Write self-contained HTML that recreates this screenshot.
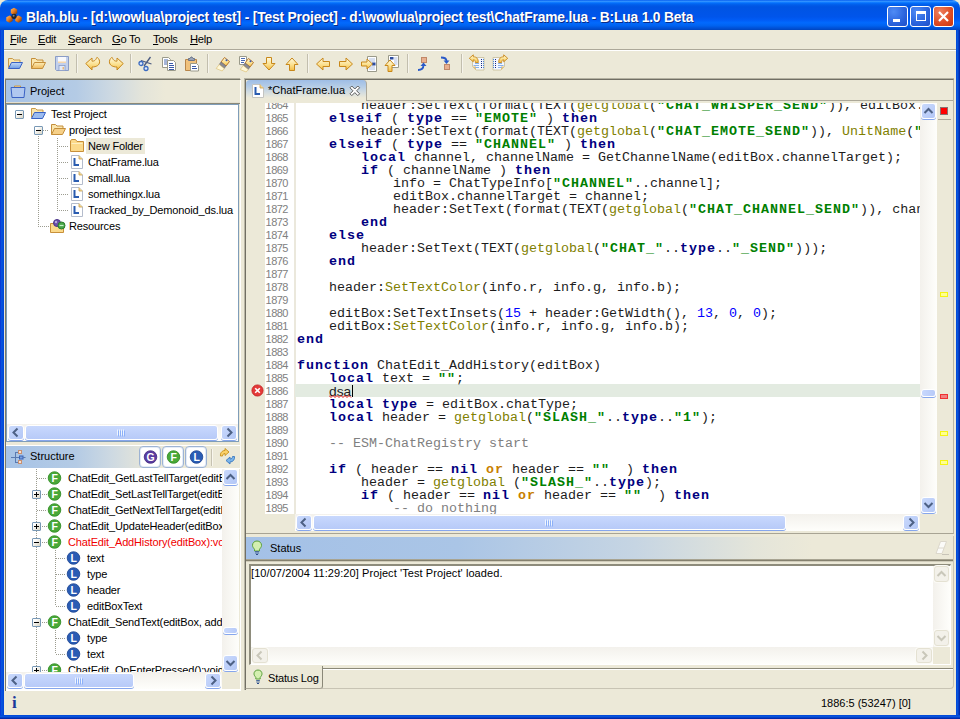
<!DOCTYPE html>
<html><head><meta charset="utf-8"><title>Blah.blu - B:Lua 1.0 Beta</title>
<style>
*{box-sizing:border-box;margin:0;padding:0}
html,body{width:960px;height:719px;overflow:hidden;background:#ece9d8}
body{position:relative;font-family:"Liberation Sans",sans-serif;font-size:11px;color:#000}
.abs{position:absolute}
#title{left:0;top:0;width:960px;height:30px;border-radius:8px 8px 0 0;
 background:linear-gradient(to bottom,#0058ee 0%,#3593ff 4%,#288eff 6%,#127dff 8%,#036ffc 10%,#0262ee 14%,#0057e5 20%,#0054e3 24%,#0055eb 56%,#005bf5 66%,#026afe 76%,#0062ef 86%,#0054dc 92%,#004ccc 97%,#0044bc 100%)}
#title .txt{left:26px;top:10px;font-weight:bold;font-size:13.8px;letter-spacing:-.165px;color:#fff;white-space:nowrap;text-shadow:1px 1px 0 #0a2c86}
#bl{left:0;top:30px;width:4px;height:689px;background:linear-gradient(to right,#0831d9,#0855dd 40%,#0046d8)}
#br{left:956px;top:30px;width:4px;height:689px;background:linear-gradient(to right,#0046d8,#0855dd 40%,#001ea0)}
#bb{left:0;top:715px;width:960px;height:4px;background:linear-gradient(to bottom,#0046d8,#0855dd 40%,#001ea0)}
#menu{left:4px;top:30px;width:952px;height:20px;background:#ece9d8}
#menu span{position:absolute;top:3px;font-size:11.2px;letter-spacing:-.3px;white-space:nowrap}
#menu u{text-decoration:underline}
.wb{top:6px;width:21px;height:21px;border:1px solid #fff;border-radius:3px;background:radial-gradient(circle at 30% 25%,#4f8bf5,#2a63dc 60%,#1e4fc8)}
.wb.wc{background:radial-gradient(circle at 30% 25%,#ee8060,#de4a22 60%,#c8360e)}
/*STCSS*/
/*ENDSTCSS*//*LEFTCSS*/
.sbtn{position:absolute;border:1px solid #fff;border-radius:3px;background:linear-gradient(135deg,#c9d9fc,#b3c7f6);box-shadow:0 1px 0 #86a6ec}
.thumb{position:absolute;border:1px solid #fff;border-radius:3px;background:linear-gradient(to bottom,#c8d8fd,#b7caf8);box-shadow:0 1px 0 #86a6ec}
.thumbv{position:absolute;border:1px solid #fff;border-radius:3px;background:linear-gradient(to right,#c8d8fd,#b7caf8);box-shadow:0 1px 0 #86a6ec}
.dbtn{position:absolute;border:1px solid #e4e1d2;border-radius:3px;background:#f3f1ea;box-shadow:0 0 0 1px #fbfaf6}

.hdr{background:linear-gradient(to right,#a7c3e6 0%,#b4cbe5 30%,#cdd9e2 45%,#e3e4da 58%,#ece9d8 68%)}
.hdr .t{position:absolute;left:24px;top:5px;font-size:11px;white-space:nowrap}
.tree{background:#fff;overflow:hidden}
.row{position:absolute;left:0;height:16px;line-height:16px;white-space:nowrap;font-size:11px;letter-spacing:-.15px}
.row .lb{position:absolute;top:0;height:16px;padding:0 2px 0 2px}
.box{position:absolute;width:9px;height:9px;border:1px solid #7898b5;border-radius:1px;background:linear-gradient(135deg,#fff 20%,#d8d4c4 100%)}
.box:before{content:"";position:absolute;left:1px;top:3px;width:5px;height:1px;background:#000}
.box.p:after{content:"";position:absolute;left:3px;top:1px;width:1px;height:5px;background:#000}
.dv{position:absolute;width:1px;background-image:linear-gradient(to bottom,#9c9c90 50%,transparent 50%);background-size:1px 2px}
.dh{position:absolute;height:1px;background-image:linear-gradient(to right,#9c9c90 50%,transparent 50%);background-size:2px 1px}
/*ENDLEFTCSS*//*EDCSS*/
#code{font-family:"Liberation Mono",monospace;font-size:12px;line-height:13px;white-space:pre;color:#1c1c1c}
#code .ln{position:absolute;left:0;height:13px;transform:scaleX(1.11111);transform-origin:0 0}
#code b{font-weight:bold;letter-spacing:.9px}
.k{color:#000080}.s{color:#008000}.o{color:#c88000}.n{color:#0000ff;}.f{color:#808000}.c{color:#808080}
#nums{font-size:11px;letter-spacing:-.5px;text-align:right;line-height:13px;color:#808080;white-space:pre}
#nums div{position:absolute;right:6px;height:13px}
/*ENDEDCSS*/</style></head><body>
<div id="title" class="abs"><svg class="abs" style="left:5px;top:7px" width="18" height="17" viewBox="0 0 18 17"><defs><linearGradient id="og" x1="0" y1="0" x2="1" y2="1"><stop offset="0" stop-color="#ffc070"/><stop offset=".5" stop-color="#e87818"/><stop offset="1" stop-color="#5a3018"/></linearGradient></defs><path d="M9 .8l3.200 1.800v3.600l-3.200 1.800-3.200-1.800v-3.600z" fill="url(#og)"/><path d="M4.500 8.500l3.200 1.800v3.600l-3.200 1.800-3.200-1.800v-3.600z" fill="url(#og)"/><path d="M13.500 8.500l3.200 1.800v3.600l-3.200 1.800-3.200-1.800v-3.600z" fill="url(#og)"/><circle cx="9" cy="9.300" r="2.600" fill="#20242c"/><circle cx="8.600" cy="8.800" r="1" fill="#788088"/></svg><div class="abs wb" style="left:887px"><div class="abs" style="left:5px;top:12px;width:7px;height:3px;background:#fff"></div></div>
<div class="abs wb" style="left:910px"><div class="abs" style="left:5px;top:4px;width:10px;height:10px;border:1px solid #fff;border-top-width:3px"></div></div>
<div class="abs wb wc" style="left:933px"><svg class="abs" style="left:0;top:0" width="19" height="19"><path d="M5 5l9 9M14 5l-9 9" stroke="#fff" stroke-width="2.200"/></svg></div><div class="abs txt">Blah.blu - [d:\wowlua\project test] - [Test Project] - d:\wowlua\project test\ChatFrame.lua - B:Lua 1.0 Beta</div></div>
<div id="bl" class="abs"></div><div id="br" class="abs"></div><div id="bb" class="abs"></div>
<div id="menu" class="abs"><span style="left:6px"><u>F</u>ile</span><span style="left:34px"><u>E</u>dit</span><span style="left:64px"><u>S</u>earch</span><span style="left:108px"><u>G</u>o To</span><span style="left:149px"><u>T</u>ools</span><span style="left:186px"><u>H</u>elp</span></div>
<div id="tbsep" class="abs" style="left:4px;top:49px;width:952px;height:2px;border-top:1px solid #aca899;border-bottom:1px solid #fff"></div>
<div id="toolbar" class="abs" style="left:0;top:51px;width:960px;height:28px">
<svg class="abs" style="left:0;top:0" width="960" height="28" viewBox="0 0 960 28">
<defs>
<linearGradient id="gold" x1="0" y1="0" x2="0" y2="1"><stop offset="0" stop-color="#fffbe2"/><stop offset=".55" stop-color="#fbe08e"/><stop offset="1" stop-color="#f4bc44"/></linearGradient>
<linearGradient id="fold" x1="0" y1="0" x2="0" y2="1"><stop offset="0" stop-color="#fdeeb8"/><stop offset="1" stop-color="#eeb85a"/></linearGradient>
<linearGradient id="blu" x1="0" y1="0" x2="0" y2="1"><stop offset="0" stop-color="#c4daf8"/><stop offset="1" stop-color="#6c9ce4"/></linearGradient>
</defs>
<g fill="none" stroke="#c2beae"><path d="M76.5 3v19M130.5 3v19M207.5 3v19M307.5 3v19M407.5 3v19M461.5 3v19"/></g>
<g fill="none" stroke="#f6f4ec"><path d="M77.5 3v19M131.5 3v19M208.5 3v19M308.5 3v19M408.5 3v19M462.5 3v19"/></g>
<!-- open project -->
<g transform="translate(7,5)"><path d="M1.5 11.5V2.5h4l1.5 1.5h6v2" fill="#fae6ae" stroke="#c89a4a"/><path d="M1.5 12.5l3-6h11l-3 6z" fill="url(#blu)" stroke="#3a62c4"/></g>
<!-- open folder -->
<g transform="translate(30,5)"><path d="M1.5 12.5V2.5h4l1.5 1.5h6v2.5" fill="#fae6ae" stroke="#c48e3a"/><path d="M1.5 12.5l3-6h11l-3 6z" fill="url(#fold)" stroke="#c48e3a"/></g>
<!-- save disabled -->
<g transform="translate(54,4)"><path d="M1.500 1.500h13v14h-12l-1-1z" fill="#c2d0ec" stroke="#8a9cc6"/><rect x="4" y="2" width="8" height="6" fill="#f8f9fd" stroke="none"/><rect x="4" y="6.500" width="8" height="1.500" fill="#f6d6aa"/><rect x="5" y="10.500" width="6" height="5" fill="#e2eaf8" stroke="#8a9cc6" stroke-width=".8"/><rect x="8.500" y="12" width="1.500" height="2.500" fill="#eab878"/></g>
<!-- undo -->
<g transform="translate(85,5)"><path d="M.8 7.5L7 2v3.2c1.5 0 3.600-.3 4.800-3.700c.5-.3 2.800 1.500 2.800 4.300c0 3.200-3 5.200-7.600 5.200V14z" fill="url(#gold)" stroke="#c8881a" stroke-width="1" stroke-linejoin="round"/></g>
<!-- redo -->
<g transform="translate(124,5) scale(-1,1)"><path d="M.8 7.500L7 2v3.200c1.500 0 3.600-.3 4.800-3.700c.5-.3 2.800 1.500 2.800 4.300c0 3.200-3 5.200-7.600 5.200V14z" fill="url(#gold)" stroke="#c8881a" stroke-width="1" stroke-linejoin="round"/></g>
<!-- cut -->
<g transform="translate(138,5)" fill="none" stroke="#3a6ac0" stroke-width="1.300"><path d="M12.500 1L6 10M3 4.500l10.500 3.500" stroke="#4a5a80"/><circle cx="3" cy="7.500" r="2" fill="#dfeafc"/><circle cx="8" cy="12.500" r="2" fill="#dfeafc"/></g>
<!-- copy -->
<g transform="translate(161,5)"><path d="M1.500 1.500h6l2 2v8h-8z" fill="#fff" stroke="#9a9a8a"/><path d="M3 4h4M3 6h5M3 8h5" stroke="#4a6ab0"/><path d="M6.500 4.500h6l2 2v8h-8z" fill="#fff" stroke="#9a9a8a"/><path d="M8 7.500h4M8 9.500h5M8 11.500h5M8 13.500h5" stroke="#3a5aa8"/></g>
<!-- paste -->
<g transform="translate(184,5)"><path d="M1.500 3.500h11v11h-11z" fill="#f0c27c" stroke="#b8864a"/><path d="M4.500 4.500v-2h1.500l1-1.500h1l1 1.500h1.500v2z" fill="#9aa4b8" stroke="#6a7488"/><path d="M6.500 7.500h6l2 2v5.500h-8z" fill="#fff" stroke="#9a9a8a"/><path d="M8 10.500h4M8 12.500h5" stroke="#3a5aa8"/></g>
<!-- find -->
<g transform="translate(215,5)"><path d="M9.500 1.500l5 4-3.500 4.500-5-4z" fill="url(#gold)" stroke="#b8782a"/><circle cx="11.500" cy="4.200" r="1" fill="#3a5ab0"/><path d="M6 6l5 4-1.800 2.500-5-4z" fill="#8a8a92" stroke="#6a6a72" stroke-width=".6"/><path d="M4.200 8.500l5 4-2 2.500-6-2.500z" fill="#fff8d8" stroke="#d8b868" stroke-width=".6"/></g>
<!-- find next -->
<g transform="translate(238,5)"><path d="M1.500 .5h7v8h-7z" fill="#fff" stroke="#9a9a8a"/><path d="M3 2.500h4M3 4.500h4M3 6.500h3" stroke="#4a6ab0"/><g transform="translate(1,1)"><path d="M9.500 1.500l5 4-3.500 4.500-5-4z" fill="url(#gold)" stroke="#b8782a"/><circle cx="11.500" cy="4.200" r="1" fill="#3a5ab0"/><path d="M6 6l5 4-1.800 2.500-5-4z" fill="#8a8a92" stroke="#6a6a72" stroke-width=".6"/><path d="M4.200 8.500l5 4-2 2.500-6-2.500z" fill="#fff8d8" stroke="#d8b868" stroke-width=".6"/></g></g>
<!-- down arrow -->
<g transform="translate(261,5)"><path d="M5.500 1.500h5v6h3.500l-6 6.500-6-6.500h3.500z" fill="url(#gold)" stroke="#c8881a" stroke-linejoin="round"/></g>
<!-- up arrow -->
<g transform="translate(284,5)"><path d="M5.500 14.500h5v-6h3.500l-6-6.500-6 6.500h3.500z" fill="url(#gold)" stroke="#c8881a" stroke-linejoin="round"/></g>
<!-- left -->
<g transform="translate(315,5)"><path d="M14.500 5.500v5h-6.500v3.500l-6.500-6 6.500-6v3.500z" fill="url(#gold)" stroke="#c8881a" stroke-linejoin="round"/></g>
<!-- right -->
<g transform="translate(338,5)"><path d="M1.500 5.500v5h6.500v3.500l6.500-6-6.500-6v3.500z" fill="url(#gold)" stroke="#c8881a" stroke-linejoin="round"/></g>
<!-- right doc -->
<g transform="translate(361,5)"><path d="M6.500 .5h9v15h-9z" fill="#fff" stroke="#9a9a8a"/><path d="M8 3h6M8 5h6M8 11h6M8 13h6" stroke="#b0c0e0"/><rect x="11" y="6.500" width="3.500" height="3" fill="#2a4aa0"/><path d="M.5 6v4h5.500v3l5.500-5-5.500-5v3z" fill="url(#gold)" stroke="#c8881a" stroke-linejoin="round"/></g>
<!-- up doc -->
<g transform="translate(384,5)"><path d="M4.500 -.500h10v12h-10z" fill="#fff" stroke="#9a9a8a"/><path d="M10 2h3.500M10 4h3.500M10 6h3.500M10 8h3.500" stroke="#b0c0e0"/><rect x="6" y="1" width="3.500" height="2.500" fill="#2a4aa0"/><path d="M4 15.500h4v-6h3l-5-5.500-5 5.500h3z" fill="url(#gold)" stroke="#c8881a" stroke-linejoin="round"/></g>
<!-- step up -->
<g transform="translate(415,5)"><rect x="6.500" y="1.500" width="5" height="5" fill="#e8b090" stroke="#c08868"/><path d="M3 14c4 0 5.500-2 5.500-5" fill="none" stroke="#2a5ac8" stroke-width="1.800"/><path d="M5.500 10l3-3.500 3 3.500z" fill="#2a5ac8"/></g>
<!-- step down -->
<g transform="translate(438,5)"><rect x="6.500" y="8.500" width="5" height="5" fill="#e8b090" stroke="#c08868"/><path d="M3 1.500c4 0 5.500 1 5.500 3.500" fill="none" stroke="#2a5ac8" stroke-width="1.800"/><path d="M5.500 4.500l3 3.500 3-3.500z" fill="#2a5ac8"/></g>
<!-- 19 -->
<g transform="translate(469,5)"><path d="M5 1.500h10v12.500h-8l-3.500-3.500v-6" fill="#f4f8ff" stroke="#c8bc98" stroke-width=".8"/><path d="M3.500 10.500h3.500v3.500z" fill="#e8c070"/><path d="M6 7.500h4M4.500 9.500h5.500M6 11.500h4" stroke="#8ab0e8"/><path d="M12 3.500h1M12 5.500h1M12 7.500h1M12 9.500h1M12 11.500h1" stroke="#1a2a80" stroke-width="1.200"/><path d="M14 3.500h1M14 5.500h1M14 7.500h1M14 9.500h1M14 11.500h1" stroke="#4a8ae0" stroke-width="1.200"/><path d="M.3 2.300L4.300 -1.200V.8C7.500 .8 9.300 2.500 9.300 6.500H6.300C6.300 4.500 5.800 3.800 4.300 3.800V5.800z" fill="url(#gold)" stroke="#c8881a" stroke-width=".9" stroke-linejoin="round"/></g>
<!-- 20 -->
<g transform="translate(508,5) scale(-1,1)"><path d="M5 1.500h10v12.500h-8l-3.500-3.500v-6" fill="#f4f8ff" stroke="#c8bc98" stroke-width=".8"/><path d="M3.500 10.500h3.500v3.500z" fill="#e8c070"/><path d="M6 7.500h4M4.500 9.500h5.500M6 11.500h4" stroke="#8ab0e8"/><path d="M12 3.500h1M12 5.500h1M12 7.500h1M12 9.500h1M12 11.500h1" stroke="#1a2a80" stroke-width="1.200"/><path d="M14 3.500h1M14 5.500h1M14 7.500h1M14 9.500h1M14 11.500h1" stroke="#4a8ae0" stroke-width="1.200"/><path d="M.3 2.300L4.300 -1.200V.8C7.500 .8 9.300 2.500 9.300 6.500H6.300C6.300 4.500 5.800 3.800 4.300 3.800V5.800z" fill="url(#gold)" stroke="#c8881a" stroke-width=".9" stroke-linejoin="round"/></g>
</svg></div>
<!--TOOLBAR-->
<!--LEFT--><div class="abs" style="left:5px;top:79px;width:236px;height:612px;border-left:1px solid #7a796a;border-top:1px solid #7a796a;border-right:1px solid #fff"></div>
<div class="abs hdr" style="left:6px;top:80px;width:234px;height:22px"><svg class="abs" style="left:4px;top:4px" width="16" height="16" viewBox="0 0 16 16"><path d="M4.500 3.500v-1.500h6v1.500" fill="#f4d8a0" stroke="#c89848"/><path d="M1 3.500h14l-1 10h-12z" fill="#b0c8f0" stroke="#3a62c4"/></svg><span class="t">Project</span></div>
<div class="abs" style="left:6px;top:102px;width:234px;height:1px;background:#e4e0d0"></div><div class="abs" style="left:6px;top:103px;width:234px;height:1px;background:#8a8878"></div>
<div class="abs tree" style="left:6px;top:104px;width:233px;height:338px;border:1px solid #7f9db9">
<div class="dv" style="left:31px;top:31px;height:90px"></div>
<div class="dv" style="left:50px;top:33px;height:72px"></div>
<div class="box" style="left:8px;top:5px"></div>
<svg class="abs" style="left:23px;top:1px" width="16" height="16" viewBox="0 0 16 16"><path d="M1.500 11.500V2.500h4l1.500 1.500h6v2" fill="#fae6ae" stroke="#c89a4a"/><path d="M1.500 12.500l3-6h11l-3 6z" fill="#9cbcf0" stroke="#3a62c4"/></svg>
<div class="row" style="top:1px"><span class="lb" style="left:42px;">Test Project</span></div>
<div class="box" style="left:27px;top:21px"></div>
<div class="dh" style="left:36px;top:25px;width:6px"></div>
<svg class="abs" style="left:43px;top:17px" width="16" height="16" viewBox="0 0 16 16"><path d="M1.500 12.500V2.500h4l1.500 1.500h6v2.500" fill="#fae6ae" stroke="#c48e3a"/><path d="M1.500 12.500l3-6h11l-3 6z" fill="#f6d088" stroke="#c48e3a"/></svg>
<div class="row" style="top:17px"><span class="lb" style="left:60px;">project test</span></div>
<div class="dh" style="left:50px;top:41px;width:11px"></div>
<svg class="abs" style="left:62px;top:33px" width="16" height="16" viewBox="0 0 16 16"><path d="M1.500 13.500V3l1-1.500h4l1.500 2h6.500v10z" fill="#fbd98a" stroke="#c8903a"/><path d="M2.500 5.500h11" stroke="#fdeec0"/></svg>
<div class="row" style="top:33px"><span class="lb" style="left:79px;background:#ece9d8;">New Folder</span></div>
<div class="dh" style="left:50px;top:57px;width:11px"></div>
<svg class="abs" style="left:62px;top:49px" width="16" height="16" viewBox="0 0 16 16"><path d="M2.500 1.500h7.500l3.500 3.500v9.500h-11z" fill="#fff" stroke="#b4bccc"/><path d="M10 1.500v3.500h3.500" fill="#f4d68c" stroke="#c8a050" stroke-width=".8"/><path d="M5.500 4v7h4.500" fill="none" stroke="#2a5cb0" stroke-width="2"/></svg>
<div class="row" style="top:49px"><span class="lb" style="left:79px;">ChatFrame.lua</span></div>
<div class="dh" style="left:50px;top:73px;width:11px"></div>
<svg class="abs" style="left:62px;top:65px" width="16" height="16" viewBox="0 0 16 16"><path d="M2.500 1.500h7.500l3.500 3.500v9.500h-11z" fill="#fff" stroke="#b4bccc"/><path d="M10 1.500v3.500h3.500" fill="#f4d68c" stroke="#c8a050" stroke-width=".8"/><path d="M5.500 4v7h4.500" fill="none" stroke="#2a5cb0" stroke-width="2"/></svg>
<div class="row" style="top:65px"><span class="lb" style="left:79px;">small.lua</span></div>
<div class="dh" style="left:50px;top:89px;width:11px"></div>
<svg class="abs" style="left:62px;top:81px" width="16" height="16" viewBox="0 0 16 16"><path d="M2.500 1.500h7.500l3.500 3.500v9.500h-11z" fill="#fff" stroke="#b4bccc"/><path d="M10 1.500v3.500h3.500" fill="#f4d68c" stroke="#c8a050" stroke-width=".8"/><path d="M5.500 4v7h4.500" fill="none" stroke="#2a5cb0" stroke-width="2"/></svg>
<div class="row" style="top:81px"><span class="lb" style="left:79px;">somethingx.lua</span></div>
<div class="dh" style="left:50px;top:105px;width:11px"></div>
<svg class="abs" style="left:62px;top:97px" width="16" height="16" viewBox="0 0 16 16"><path d="M2.500 1.500h7.500l3.500 3.500v9.500h-11z" fill="#fff" stroke="#b4bccc"/><path d="M10 1.500v3.500h3.500" fill="#f4d68c" stroke="#c8a050" stroke-width=".8"/><path d="M5.500 4v7h4.500" fill="none" stroke="#2a5cb0" stroke-width="2"/></svg>
<div class="row" style="top:97px"><span class="lb" style="left:79px;">Tracked_by_Demonoid_ds.lua</span></div>
<div class="dh" style="left:31px;top:121px;width:11px"></div>
<svg class="abs" style="left:43px;top:113px" width="16" height="16" viewBox="0 0 16 16"><path d="M.5 14.500V5.500h4l1 1h8v8z" fill="#fbd98a" stroke="#c8903a"/><circle cx="7" cy="5" r="3.500" fill="#6a4ea8" stroke="#4a3488"/><circle cx="6" cy="4" r="1.200" fill="#b8a8e0"/><circle cx="11.500" cy="7.500" r="3.500" fill="#4aa84a" stroke="#2a7a2a"/><path d="M9.500 7.500h4" stroke="#c8f0c8" stroke-width="1.200"/></svg>
<div class="row" style="top:113px"><span class="lb" style="left:60px;">Resources</span></div>
</div>
<div class="abs" style="left:7px;top:424px;width:231px;height:17px;background:linear-gradient(to bottom,#f3f1ec,#fefefb)"><div class="sbtn" style="left:1px;top:1px;width:16px;height:15px"></div><div class="sbtn" style="left:214px;top:1px;width:16px;height:15px"></div><div class="thumb" style="left:18px;top:1px;width:193px;height:15px"></div><svg class="abs" style="left:0;top:0" width="231" height="17"><path d="M10.500 4.500l-4 4 4 4" fill="none" stroke="#4d6185" stroke-width="2"/><path d="M220.5 4.500l4 4-4 4" fill="none" stroke="#4d6185" stroke-width="2"/><path d="M110.5 5.500v6M112.5 5.500v6M114.5 5.500v6M116.5 5.500v6" stroke="#eef4fe"/><path d="M111.5 6.500v6M113.5 6.500v6M115.5 6.500v6M117.5 6.500v6" stroke="#8cb0f8"/></svg></div>
<div class="abs hdr" style="left:6px;top:445px;width:234px;height:23px;border-top:1px solid #fff"><svg class="abs" style="left:4px;top:3px" width="16" height="16" viewBox="0 0 16 16"><path d="M1 8.500h4M5.500 3v11M5.500 3.500h3M5.500 13.500h3M5.500 8.500h5" fill="none" stroke="#5a7ab0"/><rect x="8.500" y="1.500" width="3" height="3" fill="#f8e0d0" stroke="#c89070"/><rect x="8.500" y="11.500" width="3" height="3" fill="#f8e0d0" stroke="#c89070"/><rect x="9.500" y="7" width="3.500" height="3" fill="#7aa0e0" stroke="#3a62b4"/><path d="M13 8.500h2.500" stroke="#5a7ab0"/></svg><span class="t" style="top:4px">Structure</span>
<div class="abs" style="left:133px;top:0px;width:22px;height:22px;border:1px solid #9db3d3;border-radius:4px;background:#fff;box-shadow:inset 0 0 0 1px #e4ecf8"><svg class="abs" style="left:3px;top:2px" width="16" height="16" viewBox="0 0 16 16"><circle cx="7.500" cy="8" r="6.300" fill="#5a3ca0" stroke="#402880" stroke-width=".8"/><text x="7.600" y="11.700" font-family="Liberation Sans,sans-serif" font-size="10.500" font-weight="bold" fill="#fff" text-anchor="middle">G</text></svg></div>
<div class="abs" style="left:156px;top:0px;width:22px;height:22px;border:1px solid #9db3d3;border-radius:4px;background:#fff;box-shadow:inset 0 0 0 1px #e4ecf8"><svg class="abs" style="left:3px;top:2px" width="16" height="16" viewBox="0 0 16 16"><circle cx="7.500" cy="8" r="6.300" fill="#48a838" stroke="#2e8a22" stroke-width=".8"/><text x="7.600" y="11.700" font-family="Liberation Sans,sans-serif" font-size="10.500" font-weight="bold" fill="#fff" text-anchor="middle">F</text></svg></div>
<div class="abs" style="left:179px;top:0px;width:22px;height:22px;border:1px solid #9db3d3;border-radius:4px;background:#fff;box-shadow:inset 0 0 0 1px #e4ecf8"><svg class="abs" style="left:3px;top:2px" width="16" height="16" viewBox="0 0 16 16"><circle cx="7.500" cy="8" r="6.300" fill="#2a5cb4" stroke="#1c4490" stroke-width=".8"/><text x="7.600" y="11.700" font-family="Liberation Sans,sans-serif" font-size="10.500" font-weight="bold" fill="#fff" text-anchor="middle">L</text></svg></div>
<div class="abs" style="left:205px;top:3px;width:2px;height:17px;border-left:1px solid #c6c2b2;border-right:1px solid #f8f6ee"></div>
<svg class="abs" style="left:213px;top:2px" width="17" height="17" viewBox="0 0 17 17"><path d="M1.500 8c-.5-3 1.500-5.500 4.500-5.500v-2l4 3.500-4 3.500v-2c-1.500 0-2.500 1-2.500 2.500z" fill="#fbd26a" stroke="#c8901a" stroke-width=".9" stroke-linejoin="round"/><path d="M15.500 8.500c.5 3-1.500 5.500-4.500 5.500v2l-4-3.500 4-3.500v2c1.500 0 2.500-1 2.500-2.500z" fill="#7ab4ea" stroke="#3a78c0" stroke-width=".9" stroke-linejoin="round"/></svg>
</div>
<div class="abs" style="left:6px;top:468px;width:234px;height:1px;background:#fff"></div>
<div class="abs tree" style="left:6px;top:469px;width:216px;height:203px">
<div class="dv" style="left:30px;top:0;height:204px"></div>
<div class="dv" style="left:49px;top:81px;height:56px"></div>
<div class="dv" style="left:49px;top:161px;height:24px"></div>
<div class="dh" style="left:31px;top:9px;width:10px"></div>
<svg class="abs" style="left:41px;top:1px" width="16" height="16" viewBox="0 0 16 16"><circle cx="7.500" cy="8" r="6.300" fill="#48a838" stroke="#2e8a22" stroke-width=".8"/><text x="7.600" y="11.700" font-family="Liberation Sans,sans-serif" font-size="10.500" font-weight="bold" fill="#fff" text-anchor="middle">F</text></svg>
<div class="row" style="top:1px"><span class="lb" style="left:60px;">ChatEdit_GetLastTellTarget(editBox)</span></div>
<div class="box p" style="left:26px;top:21px;background-color:#fff"></div>
<div class="dh" style="left:36px;top:25px;width:5px"></div>
<svg class="abs" style="left:41px;top:17px" width="16" height="16" viewBox="0 0 16 16"><circle cx="7.500" cy="8" r="6.300" fill="#48a838" stroke="#2e8a22" stroke-width=".8"/><text x="7.600" y="11.700" font-family="Liberation Sans,sans-serif" font-size="10.500" font-weight="bold" fill="#fff" text-anchor="middle">F</text></svg>
<div class="row" style="top:17px"><span class="lb" style="left:60px;">ChatEdit_SetLastTellTarget(editBox, name)</span></div>
<div class="dh" style="left:31px;top:41px;width:10px"></div>
<svg class="abs" style="left:41px;top:33px" width="16" height="16" viewBox="0 0 16 16"><circle cx="7.500" cy="8" r="6.300" fill="#48a838" stroke="#2e8a22" stroke-width=".8"/><text x="7.600" y="11.700" font-family="Liberation Sans,sans-serif" font-size="10.500" font-weight="bold" fill="#fff" text-anchor="middle">F</text></svg>
<div class="row" style="top:33px"><span class="lb" style="left:60px;">ChatEdit_GetNextTellTarget(editBox)</span></div>
<div class="box p" style="left:26px;top:53px;background-color:#fff"></div>
<div class="dh" style="left:36px;top:57px;width:5px"></div>
<svg class="abs" style="left:41px;top:49px" width="16" height="16" viewBox="0 0 16 16"><circle cx="7.500" cy="8" r="6.300" fill="#48a838" stroke="#2e8a22" stroke-width=".8"/><text x="7.600" y="11.700" font-family="Liberation Sans,sans-serif" font-size="10.500" font-weight="bold" fill="#fff" text-anchor="middle">F</text></svg>
<div class="row" style="top:49px"><span class="lb" style="left:60px;">ChatEdit_UpdateHeader(editBox)</span></div>
<div class="box" style="left:26px;top:69px;background-color:#fff"></div>
<div class="dh" style="left:36px;top:73px;width:5px"></div>
<svg class="abs" style="left:41px;top:65px" width="16" height="16" viewBox="0 0 16 16"><circle cx="7.500" cy="8" r="6.300" fill="#48a838" stroke="#2e8a22" stroke-width=".8"/><text x="7.600" y="11.700" font-family="Liberation Sans,sans-serif" font-size="10.500" font-weight="bold" fill="#fff" text-anchor="middle">F</text></svg>
<div class="row" style="top:65px"><span class="lb" style="left:60px;color:#f00000;">ChatEdit_AddHistory(editBox):void</span></div>
<div class="dh" style="left:50px;top:89px;width:10px"></div>
<svg class="abs" style="left:60px;top:81px" width="16" height="16" viewBox="0 0 16 16"><circle cx="7.500" cy="8" r="6.300" fill="#2a5cb4" stroke="#1c4490" stroke-width=".8"/><text x="7.600" y="11.700" font-family="Liberation Sans,sans-serif" font-size="10.500" font-weight="bold" fill="#fff" text-anchor="middle">L</text></svg>
<div class="row" style="top:81px"><span class="lb" style="left:79px">text</span></div>
<div class="dh" style="left:50px;top:105px;width:10px"></div>
<svg class="abs" style="left:60px;top:97px" width="16" height="16" viewBox="0 0 16 16"><circle cx="7.500" cy="8" r="6.300" fill="#2a5cb4" stroke="#1c4490" stroke-width=".8"/><text x="7.600" y="11.700" font-family="Liberation Sans,sans-serif" font-size="10.500" font-weight="bold" fill="#fff" text-anchor="middle">L</text></svg>
<div class="row" style="top:97px"><span class="lb" style="left:79px">type</span></div>
<div class="dh" style="left:50px;top:121px;width:10px"></div>
<svg class="abs" style="left:60px;top:113px" width="16" height="16" viewBox="0 0 16 16"><circle cx="7.500" cy="8" r="6.300" fill="#2a5cb4" stroke="#1c4490" stroke-width=".8"/><text x="7.600" y="11.700" font-family="Liberation Sans,sans-serif" font-size="10.500" font-weight="bold" fill="#fff" text-anchor="middle">L</text></svg>
<div class="row" style="top:113px"><span class="lb" style="left:79px">header</span></div>
<div class="dh" style="left:50px;top:137px;width:10px"></div>
<svg class="abs" style="left:60px;top:129px" width="16" height="16" viewBox="0 0 16 16"><circle cx="7.500" cy="8" r="6.300" fill="#2a5cb4" stroke="#1c4490" stroke-width=".8"/><text x="7.600" y="11.700" font-family="Liberation Sans,sans-serif" font-size="10.500" font-weight="bold" fill="#fff" text-anchor="middle">L</text></svg>
<div class="row" style="top:129px"><span class="lb" style="left:79px">editBoxText</span></div>
<div class="box" style="left:26px;top:149px;background-color:#fff"></div>
<div class="dh" style="left:36px;top:153px;width:5px"></div>
<svg class="abs" style="left:41px;top:145px" width="16" height="16" viewBox="0 0 16 16"><circle cx="7.500" cy="8" r="6.300" fill="#48a838" stroke="#2e8a22" stroke-width=".8"/><text x="7.600" y="11.700" font-family="Liberation Sans,sans-serif" font-size="10.500" font-weight="bold" fill="#fff" text-anchor="middle">F</text></svg>
<div class="row" style="top:145px"><span class="lb" style="left:60px;">ChatEdit_SendText(editBox, addHistory)</span></div>
<div class="dh" style="left:50px;top:169px;width:10px"></div>
<svg class="abs" style="left:60px;top:161px" width="16" height="16" viewBox="0 0 16 16"><circle cx="7.500" cy="8" r="6.300" fill="#2a5cb4" stroke="#1c4490" stroke-width=".8"/><text x="7.600" y="11.700" font-family="Liberation Sans,sans-serif" font-size="10.500" font-weight="bold" fill="#fff" text-anchor="middle">L</text></svg>
<div class="row" style="top:161px"><span class="lb" style="left:79px">type</span></div>
<div class="dh" style="left:50px;top:185px;width:10px"></div>
<svg class="abs" style="left:60px;top:177px" width="16" height="16" viewBox="0 0 16 16"><circle cx="7.500" cy="8" r="6.300" fill="#2a5cb4" stroke="#1c4490" stroke-width=".8"/><text x="7.600" y="11.700" font-family="Liberation Sans,sans-serif" font-size="10.500" font-weight="bold" fill="#fff" text-anchor="middle">L</text></svg>
<div class="row" style="top:177px"><span class="lb" style="left:79px">text</span></div>
<div class="box p" style="left:26px;top:197px;background-color:#fff"></div>
<div class="dh" style="left:36px;top:201px;width:5px"></div>
<svg class="abs" style="left:41px;top:193px" width="16" height="16" viewBox="0 0 16 16"><circle cx="7.500" cy="8" r="6.300" fill="#48a838" stroke="#2e8a22" stroke-width=".8"/><text x="7.600" y="11.700" font-family="Liberation Sans,sans-serif" font-size="10.500" font-weight="bold" fill="#fff" text-anchor="middle">F</text></svg>
<div class="row" style="top:193px"><span class="lb" style="left:60px;">ChatEdit_OnEnterPressed():void</span></div>
</div>
<div class="abs" style="left:222px;top:469px;width:17px;height:203px;background:linear-gradient(to right,#f3f1ec,#fefefb)"><div class="sbtn" style="left:1px;top:0;width:15px;height:16px"></div><div class="sbtn" style="left:1px;top:186px;width:15px;height:16px"></div><div class="thumbv" style="left:1px;top:158px;width:15px;height:7px"></div><svg class="abs" style="left:0;top:0" width="17" height="203"><path d="M4.500 10l4-4 4 4" fill="none" stroke="#4d6185" stroke-width="2"/><path d="M4.500 192l4 4 4-4" fill="none" stroke="#4d6185" stroke-width="2"/></svg></div>
<div class="abs" style="left:6px;top:672px;width:216px;height:17px;background:linear-gradient(to bottom,#f3f1ec,#fefefb)"><div class="sbtn" style="left:1px;top:1px;width:16px;height:15px"></div><div class="sbtn" style="left:199px;top:1px;width:16px;height:15px"></div><div class="thumb" style="left:18px;top:1px;width:110px;height:15px"></div><svg class="abs" style="left:0;top:0" width="216" height="17"><path d="M10.500 4.500l-4 4 4 4" fill="none" stroke="#4d6185" stroke-width="2"/><path d="M205.5 4.500l4 4-4 4" fill="none" stroke="#4d6185" stroke-width="2"/><path d="M69.5 5.500v6M71.5 5.500v6M73.5 5.500v6M75.5 5.500v6" stroke="#eef4fe"/><path d="M70.5 6.500v6M72.5 6.500v6M74.5 6.500v6M76.5 6.500v6" stroke="#8cb0f8"/></svg></div>
<div class="abs" style="left:222px;top:672px;width:17px;height:17px;background:#ece9d8"></div>
<div class="abs" style="left:6px;top:689px;width:235px;height:2px;background:#fff"></div><!--ENDLEFT-->
<!--EDITOR--><div class="abs" style="left:245px;top:79px;width:709px;height:455px;border-left:1px solid #716f64;border-top:1px solid #716f64;border-right:1px solid #bab6a6;border-bottom:1px solid #a8a494"></div>
<div class="abs" style="left:244px;top:79px;width:1px;height:611px;background:#b9b6a6"></div><!--x244--><div class="abs" style="left:244px;top:78px;width:710px;height:1px;background:#b4b1a1"></div><div class="abs" style="left:5px;top:78px;width:235px;height:1px;background:#b4b1a1"></div><div class="abs" style="left:245px;top:79px;width:1px;height:611px;background:#716f64"></div>
<div class="abs" style="left:246px;top:80px;width:121px;height:21px;border-radius:4px 4px 0 0;border-right:1px solid #aca899;background:linear-gradient(to bottom,#9ebde6 0%,#b4cce6 30%,#d4dde0 60%,#ece9d8 85%)"><svg class="abs" style="left:5px;top:3px" width="16" height="16" viewBox="0 0 16 16"><path d="M1.500 1.500h7.500l3.500 3.500v9.500h-11z" fill="#fff" stroke="#c4c4c0"/><path d="M9 1.500v3.500h3.500" fill="#f4d68c" stroke="#c8a050" stroke-width=".8"/><path d="M4.500 4v7h4.500" fill="none" stroke="#2a5cb0" stroke-width="2"/></svg><span class="abs" style="left:22px;top:4px;font-size:11px;white-space:nowrap">*ChatFrame.lua</span><svg class="abs" style="left:103px;top:5px" width="12" height="12" viewBox="0 0 12 12"><path d="M1 2.800L2.800 1 5.800 4 8.800 1 10.600 2.800 7.600 5.800 10.600 8.800 8.800 10.600 5.800 7.600 2.800 10.600 1 8.800 4 5.800z" fill="#fff" stroke="#5c5c5c" stroke-width="1"/></svg></div>
<div class="abs" style="left:366px;top:100px;width:587px;height:1px;background:#aca899"></div>
<div class="abs" style="left:265px;top:103px;width:655px;height:411px;background:#fff;overflow:hidden">
<div class="abs" style="left:29px;top:0;width:2px;height:411px;background:#ebe8dc"></div>
<div class="abs" style="left:30px;top:281px;width:625px;height:13px;background:#e3ebe1"></div>
<div id="nums" class="abs" style="left:1px;top:0;width:28px;height:411px">
<div style="top:-4px">1864</div>
<div style="top:9px">1865</div>
<div style="top:22px">1866</div>
<div style="top:35px">1867</div>
<div style="top:48px">1868</div>
<div style="top:61px">1869</div>
<div style="top:74px">1870</div>
<div style="top:87px">1871</div>
<div style="top:100px">1872</div>
<div style="top:113px">1873</div>
<div style="top:126px">1874</div>
<div style="top:139px">1875</div>
<div style="top:152px">1876</div>
<div style="top:165px">1877</div>
<div style="top:178px">1878</div>
<div style="top:191px">1879</div>
<div style="top:204px">1880</div>
<div style="top:217px">1881</div>
<div style="top:230px">1882</div>
<div style="top:243px">1883</div>
<div style="top:256px">1884</div>
<div style="top:269px">1885</div>
<div style="top:282px">1886</div>
<div style="top:295px">1887</div>
<div style="top:308px">1888</div>
<div style="top:321px">1889</div>
<div style="top:334px">1890</div>
<div style="top:347px">1891</div>
<div style="top:360px">1892</div>
<div style="top:373px">1893</div>
<div style="top:386px">1894</div>
<div style="top:399px">1895</div>
</div>
<div id="code" class="abs" style="left:32px;top:0;width:623px;height:411px;overflow:hidden">
<div class="ln" style="top:-3px">        header:SetText(format(TEXT(<span class="f">getglobal</span>(<b class="s">&quot;CHAT_WHISPER_SEND&quot;</b>)), editBox.</div>
<div class="ln" style="top:10px">    <b class="k">elseif</b> ( <b class="k">type</b> == <b class="s">&quot;EMOTE&quot;</b> ) <b class="k">then</b></div>
<div class="ln" style="top:23px">        header:SetText(format(TEXT(<span class="f">getglobal</span>(<b class="s">&quot;CHAT_EMOTE_SEND&quot;</b>)), <span class="f">UnitName</span>(<b class="s">&quot;</b></div>
<div class="ln" style="top:36px">    <b class="k">elseif</b> ( <b class="k">type</b> == <b class="s">&quot;CHANNEL&quot;</b> ) <b class="k">then</b></div>
<div class="ln" style="top:49px">        <b class="k">local</b> channel, channelName = GetChannelName(editBox.channelTarget);</div>
<div class="ln" style="top:62px">        <b class="k">if</b> ( channelName ) <b class="k">then</b></div>
<div class="ln" style="top:75px">            info = ChatTypeInfo[<b class="s">&quot;CHANNEL&quot;</b>..channel];</div>
<div class="ln" style="top:88px">            editBox.channelTarget = channel;</div>
<div class="ln" style="top:101px">            header:SetText(format(TEXT(<span class="f">getglobal</span>(<b class="s">&quot;CHAT_CHANNEL_SEND&quot;</b>)), chan</div>
<div class="ln" style="top:114px">        <b class="k">end</b></div>
<div class="ln" style="top:127px">    <b class="k">else</b></div>
<div class="ln" style="top:140px">        header:SetText(TEXT(<span class="f">getglobal</span>(<b class="s">&quot;CHAT_&quot;</b>..<b class="k">type</b>..<b class="s">&quot;_SEND&quot;</b>)));</div>
<div class="ln" style="top:153px">    <b class="k">end</b></div>
<div class="ln" style="top:166px"></div>
<div class="ln" style="top:179px">    header:<span class="f">SetTextColor</span>(info.r, info.g, info.b);</div>
<div class="ln" style="top:192px"></div>
<div class="ln" style="top:205px">    editBox:SetTextInsets(<span class="n">15</span> + header:GetWidth(), <span class="n">13</span>, <span class="n">0</span>, <span class="n">0</span>);</div>
<div class="ln" style="top:218px">    editBox:<span class="f">SetTextColor</span>(info.r, info.g, info.b);</div>
<div class="ln" style="top:231px"><b class="k">end</b></div>
<div class="ln" style="top:244px"></div>
<div class="ln" style="top:257px"><b class="k">function</b> ChatEdit_AddHistory(editBox)</div>
<div class="ln" style="top:270px">    <b class="k">local</b> text = <b class="s">&quot;&quot;</b>;</div>
<div class="ln" style="top:283px">    <span style="font-family:\'Liberation Sans\',sans-serif;font-size:12.4px">dsa</span></div>
<div class="ln" style="top:296px">    <b class="k">local</b> <b class="k">type</b> = editBox.chatType;</div>
<div class="ln" style="top:309px">    <b class="k">local</b> header = <span class="f">getglobal</span>(<b class="s">&quot;SLASH_&quot;</b>..<b class="k">type</b>..<b class="s">&quot;1&quot;</b>);</div>
<div class="ln" style="top:322px"></div>
<div class="ln" style="top:335px">    <span class="c">-- ESM-ChatRegistry start</span></div>
<div class="ln" style="top:348px"></div>
<div class="ln" style="top:361px">    <b class="k">if</b> ( header == <b class="k">nil</b> <b class="o">or</b> header == <b class="s">&quot;&quot;</b>  ) <b class="k">then</b></div>
<div class="ln" style="top:374px">        header = <span class="f">getglobal</span> (<b class="s">&quot;SLASH_&quot;</b>..<b class="k">type</b>);</div>
<div class="ln" style="top:387px">        <b class="k">if</b> ( header == <b class="k">nil</b> <b class="o">or</b> header == <b class="s">&quot;&quot;</b>  ) <b class="k">then</b></div>
<div class="ln" style="top:400px">            <span class="c">-- do nothing</span></div>
<svg class="abs" style="left:32px;top:291px" width="24" height="4"><path d="M0 1.500l2 2 2-2 2 2 2-2 2 2 2-2 2 2 2-2 2 2 2-2 2 2" fill="none" stroke="#e81010" stroke-width="1"/></svg>
<div class="abs" style="left:55px;top:282px;width:1px;height:12px;background:#000"></div>
</div></div>
<svg class="abs" style="left:251px;top:384px" width="13" height="13" viewBox="0 0 13 13"><circle cx="6.500" cy="6.500" r="5.600" fill="#e43a3a" stroke="#c02020" stroke-width=".8"/><path d="M4.200 4.200l4.600 4.600M8.800 4.200l-4.600 4.600" stroke="#fff" stroke-width="1.600"/></svg>
<div class="abs" style="left:920px;top:103px;width:17px;height:411px;background:linear-gradient(to right,#f3f1ec,#fefefb)"><div class="sbtn" style="left:1px;top:0;width:15px;height:16px"></div><div class="sbtn" style="left:1px;top:394px;width:15px;height:16px"></div><div class="thumbv" style="left:1px;top:286px;width:15px;height:8px"></div><svg class="abs" style="left:0;top:0" width="17" height="411"><path d="M4.500 10l4-4 4 4" fill="none" stroke="#4d6185" stroke-width="2"/><path d="M4.500 400l4 4 4-4" fill="none" stroke="#4d6185" stroke-width="2"/></svg></div>
<div class="abs" style="left:247px;top:514px;width:690px;height:18px;background:#ece9d8"></div>
<div class="abs" style="left:295px;top:514px;width:625px;height:17px;background:linear-gradient(to bottom,#f3f1ec,#fefefb)"><div class="sbtn" style="left:1px;top:1px;width:16px;height:15px"></div><div class="sbtn" style="left:608px;top:1px;width:16px;height:15px"></div><div class="thumb" style="left:18px;top:1px;width:473px;height:15px"></div><svg class="abs" style="left:0;top:0" width="625" height="17"><path d="M10.500 4.500l-4 4 4 4" fill="none" stroke="#4d6185" stroke-width="2"/><path d="M614.5 4.500l4 4-4 4" fill="none" stroke="#4d6185" stroke-width="2"/><path d="M250.5 5.500v6M252.5 5.500v6M254.5 5.500v6M256.5 5.500v6" stroke="#eef4fe"/><path d="M251.5 6.500v6M253.5 6.500v6M255.5 6.500v6M257.5 6.500v6" stroke="#8cb0f8"/></svg></div>
<div class="abs" style="left:940px;top:107px;width:8px;height:8px;background:#ff0000;border:1px solid #8a7070"></div>
<div class="abs" style="left:938px;top:119px;width:13px;height:1px;background:#aca899"></div>
<div class="abs" style="left:940px;top:292px;width:8px;height:5px;background:#ffff90;border:1px solid #f4f410"></div>
<div class="abs" style="left:940px;top:394px;width:8px;height:5px;background:#f08080;border:1px solid #f03030"></div>
<div class="abs" style="left:940px;top:431px;width:8px;height:5px;background:#ffff90;border:1px solid #f4f410"></div>
<div class="abs" style="left:940px;top:460px;width:8px;height:5px;background:#ffff90;border:1px solid #f4f410"></div><!--ENDEDITOR-->
<!--STATUS--><div class="abs" style="left:245px;top:536px;width:709px;height:153px;border-left:1px solid #716f64;border-right:1px solid #c8c4b4;border-bottom:1px solid #c8c4b4;border-radius:0 0 4px 0"></div>
<div class="abs" style="left:246px;top:537px;width:707px;height:22px;background:linear-gradient(to right,#a4c1e7 0%,#aac5e6 30%,#c6d5e3 55%,#e4e5da 72%,#ece9d8 80%)"><svg class="abs" style="left:4px;top:3px" width="16" height="16" viewBox="0 0 16 16"><path d="M7 1c-2.800 0-4.500 2-4.500 4.300c0 1.800 1.200 2.700 2 4v1.700h5v-1.700c.8-1.300 2-2.200 2-4c0-2.300-1.700-4.300-4.500-4.300z" fill="#d4efb0" stroke="#5aa03a"/><path d="M5 11.500h4M5 13h4" stroke="#4a6a9a"/><path d="M6 14.500h2" stroke="#2a4a8a"/></svg><span class="abs" style="left:24px;top:5px;font-size:11px">Status</span><svg class="abs" style="left:688px;top:3px" width="16" height="16" viewBox="0 0 16 16"><path d="M6.500 1.500h6l-4.500 12h-6z" fill="#fbfbf8" stroke="#dcd8cc"/><path d="M4 8h6" stroke="#dcd8cc"/><path d="M8 14.500h7" stroke="#c8c4b8"/></svg></div>
<div class="abs" style="left:246px;top:559px;width:707px;height:1px;background:#a8a492"></div><div class="abs" style="left:246px;top:560px;width:707px;height:1px;background:#85816f"></div>
<div class="abs" style="left:246px;top:561px;width:707px;height:1px;background:#d0ccba"></div>
<div class="abs" style="left:249px;top:564px;width:702px;height:101px;border-top:2px solid #7c7a6c;border-left:2px solid #7c7a6c;border-right:1px solid #fff;border-bottom:1px solid #fff;border-top-color:#8e8c7c;background:#fff;border-left-color:#8e8c7c"><span class="abs" style="left:0px;top:1px;font-size:11px;white-space:nowrap;letter-spacing:.08px">[10/07/2004 11:29:20] Project 'Test Project' loaded.</span></div>
<div class="abs" style="left:933px;top:566px;width:17px;height:81px;background:linear-gradient(to right,#f3f1ec,#fefefb)"><div class="dbtn" style="left:1px;top:0;width:15px;height:16px"></div><div class="dbtn" style="left:1px;top:64px;width:15px;height:16px"></div><svg class="abs" style="left:0;top:0" width="17" height="81"><path d="M4.500 10l4-4 4 4" fill="none" stroke="#c9c7ba" stroke-width="2"/><path d="M4.500 70l4 4 4-4" fill="none" stroke="#c9c7ba" stroke-width="2"/></svg></div>
<div class="abs" style="left:251px;top:647px;width:682px;height:17px;background:linear-gradient(to bottom,#f3f1ec,#fefefb)"><div class="dbtn" style="left:1px;top:1px;width:16px;height:15px"></div><div class="dbtn" style="left:665px;top:1px;width:16px;height:15px"></div><svg class="abs" style="left:0;top:0" width="682" height="17"><path d="M10.500 4.500l-4 4 4 4" fill="none" stroke="#c9c7ba" stroke-width="2"/><path d="M671.5 4.500l4 4-4 4" fill="none" stroke="#c9c7ba" stroke-width="2"/></svg></div>
<div class="abs" style="left:933px;top:647px;width:17px;height:17px;background:#ece9d8"></div>
<div class="abs" style="left:322px;top:668px;width:631px;height:1px;background:#8a8878"></div>
<div class="abs" style="left:322px;top:669px;width:631px;height:1px;background:#fff"></div>
<div class="abs" style="left:246px;top:666px;width:77px;height:23px;border-right:1px solid #8a8878;border-bottom:1px solid #aca899;border-radius:0 0 3px 0"><svg class="abs" style="left:6px;top:3px" width="14" height="16" viewBox="0 0 14 16"><path d="M6 1c-2.500 0-4 1.800-4 3.800c0 1.600 1 2.400 1.800 3.600v1.600h4.400v-1.600c.8-1.200 1.800-2 1.800-3.600c0-2-1.500-3.800-4-3.800z" fill="#d4efb0" stroke="#5aa03a"/><path d="M4.200 11.500h3.600M4.200 13h3.600" stroke="#4a6a9a"/><path d="M5 14.500h2" stroke="#2a4a8a"/></svg><span class="abs" style="left:22px;top:6px;font-size:11px;white-space:nowrap;letter-spacing:-.2px">Status Log</span></div>
<span class="abs" style="left:12px;top:693px;font:bold 17px 'Liberation Serif',serif;color:#1a3a9a">i</span>
<span class="abs" style="left:821px;top:697px;font-size:11px;white-space:nowrap">1886:5 (53247) [0]</span><!--ENDSTATUS-->
</body></html>
